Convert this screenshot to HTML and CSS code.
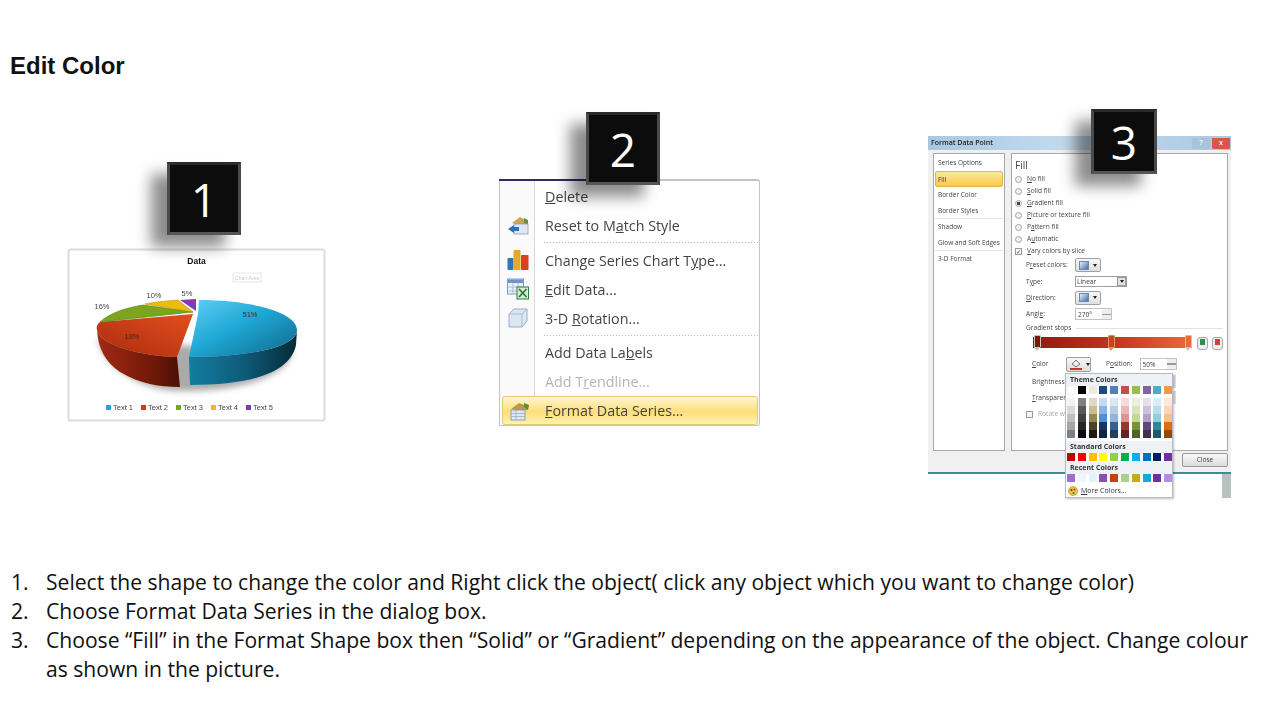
FILE: index.html
```html
<!DOCTYPE html>
<html lang="en">
<head>
    <meta charset="UTF-8">
    <title>Edit Color</title>
    <link rel="stylesheet" href="styles.css">
</head>
<body>
<div class="slide">
    <h1 class="title">Edit Color</h1>

    <div class="stage">
        <!-- step 1: chart -->
        <svg class="chart shot" viewBox="67 248 259 174" width="259" height="174">
            <defs>
                <linearGradient id="blueTop" x1="0" y1="0" x2="1" y2="1">
                    <stop offset="0" stop-color="#5fd0f2"/>
                    <stop offset=".45" stop-color="#1fa8d6"/>
                    <stop offset="1" stop-color="#0f6687"/>
                </linearGradient>
                <linearGradient id="blueSide" x1="0" y1="0" x2="1" y2="0">
                    <stop offset="0" stop-color="#147da2"/>
                    <stop offset=".5" stop-color="#0e5c79"/>
                    <stop offset="1" stop-color="#062a38"/>
                </linearGradient>
                <linearGradient id="redTop" x1="1" y1="0" x2="0" y2="1">
                    <stop offset="0" stop-color="#e2501c"/>
                    <stop offset="1" stop-color="#a92a10"/>
                </linearGradient>
                <linearGradient id="redSide" x1="0" y1="0" x2="1" y2="0">
                    <stop offset="0" stop-color="#a32a12"/>
                    <stop offset=".7" stop-color="#6d1809"/>
                    <stop offset="1" stop-color="#4d0f05"/>
                </linearGradient>
                <filter id="soft" x="-10%" y="-10%" width="120%" height="130%">
                    <feGaussianBlur stdDeviation="3"/>
                </filter>
            </defs>
            <rect class="chart-frame" x="68.5" y="249.5" width="256" height="171" rx="2"/>
            <text class="chart-title" x="196.5" y="264">Data</text>
            <rect x="233" y="273" width="28" height="9" fill="#fff" stroke="#ddd" stroke-width=".7"/>
            <text x="247" y="280" class="chart-ghost">Chart Area</text>

            <path d="M98 340 C104 368 145 392 182 391 L192 391 C240 390 285 378 293 352 Z" fill="#aaa" filter="url(#soft)"/>

            <path d="M97 330 C98 348 105 362 120 372 C140 384 160 387 180 387 L177 357 C140 356 100 345 97 330 Z" fill="url(#redSide)"/>
            <path d="M193 314 L100 322 C97 324 96 327 97 330 C100 345 140 356 177 357 Z" fill="url(#redTop)"/>
            <path d="M193 312 L100 322 C110 313 125 308 143 305 Z" fill="#7ba51d" stroke="#557a10" stroke-width=".6"/>
            <path d="M193 312 L145 304 C155 302 165 301 178 300 Z" fill="#edbd0b" stroke="#a98408" stroke-width=".5"/>
            <path d="M196 311 L180 300 L196 299 Z" fill="#8239b5"/>

            <path d="M297 330 C297 347 250 357 189 357 L190 385 C245 385 290 375 296 345 Z" fill="url(#blueSide)"/>
            <path d="M199 300 C250 300 297 312 297 330 C297 347 250 357 189 357 L198 314 Z" fill="url(#blueTop)"/>

            <text class="pie-pct" x="250" y="317">51%</text>
            <text class="pie-pct" x="132" y="339">18%</text>
            <text class="pie-out" x="102" y="309">16%</text>
            <text class="pie-out" x="154" y="298">10%</text>
            <text class="pie-out" x="187" y="296">5%</text>

            <rect x="106" y="405" width="5" height="5" fill="#1fa8d6"/>
            <text class="legend" x="113" y="410">Text 1</text>
            <rect x="141" y="405" width="5" height="5" fill="#c8401a"/>
            <text class="legend" x="148" y="410">Text 2</text>
            <rect x="176" y="405" width="5" height="5" fill="#7ba51d"/>
            <text class="legend" x="183" y="410">Text 3</text>
            <rect x="211" y="405" width="5" height="5" fill="#edbd0b"/>
            <text class="legend" x="218" y="410">Text 4</text>
            <rect x="246" y="405" width="5" height="5" fill="#8239b5"/>
            <text class="legend" x="253" y="410">Text 5</text>
        </svg>

        <!-- step 2: context menu -->
        <div class="menu shot">
            <div class="menu-row"><span class="menu-icon"></span><span><u>D</u>elete</span></div>
            <div class="menu-row">
                <span class="menu-icon">
                    <svg width="22" height="22" viewBox="0 0 22 22">
                        <path d="M5 8 L13 2 L20 6 L20 9 L8 9 Z" fill="#c9a552"/>
                        <rect x="7" y="9" width="14" height="10" fill="#dfe8f2" stroke="#8b9db3" stroke-width=".8"/>
                        <path d="M1 14 L7 10 L7 12 L12 12 L12 16 L7 16 L7 18 Z" fill="#2f6db5"/>
                        <path d="M17 3 L21 5 L21 9 L17 8 Z" fill="#6c8f3c"/>
                    </svg>
                </span>
                <span>Reset to M<u>a</u>tch Style</span>
            </div>
            <div class="menu-sep"></div>
            <div class="menu-row">
                <span class="menu-icon">
                    <svg width="22" height="22" viewBox="0 0 22 22">
                        <rect x="0.5" y="9" width="6" height="12" rx="1" fill="#2f73b8"/>
                        <rect x="6.5" y="1" width="7" height="20" rx="1" fill="#e3a92b"/>
                        <rect x="14" y="6" width="7.5" height="15" rx="1" fill="#d8431f"/>
                    </svg>
                </span>
                <span>Change Series Chart T<u>y</u>pe...</span>
            </div>
            <div class="menu-row">
                <span class="menu-icon">
                    <svg width="22" height="22" viewBox="0 0 22 22">
                        <rect x="0.5" y="1" width="16" height="15" fill="#eaf0f8" stroke="#7f9cc4"/>
                        <rect x="1" y="1.5" width="15" height="3.5" fill="#6f94c9"/>
                        <path d="M1 9 H16 M1 13 H16 M6 5 V16 M11 5 V16" stroke="#9db4d6" stroke-width=".8"/>
                        <rect x="10" y="9" width="11.5" height="12" fill="#d9ecd8" stroke="#2d7d3c"/>
                        <path d="M12 11 L19.5 19 M19.5 11 L12 19" stroke="#1f7a33" stroke-width="1.7"/>
                    </svg>
                </span>
                <span><u>E</u>dit Data...</span>
            </div>
            <div class="menu-row">
                <span class="menu-icon">
                    <svg width="22" height="22" viewBox="0 0 22 22">
                        <path d="M2 7 L7 2 L20 2 L20 14 L15 20 L2 20 Z" fill="#dbe6f2" stroke="#9aaec8"/>
                        <path d="M2 7 L15 7 L15 20 M15 7 L20 2" fill="none" stroke="#a9bcd3"/>
                    </svg>
                </span>
                <span>3-D <u>R</u>otation...</span>
            </div>
            <div class="menu-sep"></div>
            <div class="menu-row"><span class="menu-icon"></span><span>Add Data La<u>b</u>els</span></div>
            <div class="menu-row menu-disabled"><span class="menu-icon"></span><span>Add T<u>r</u>endline...</span></div>
            <div class="menu-row menu-active">
                <span class="menu-icon">
                    <svg width="22" height="22" viewBox="0 0 22 22">
                        <path d="M3 9 L11 3 L19 6 L20 10 L8 10 Z" fill="#b99a4e"/>
                        <rect x="3" y="10" width="14" height="10" fill="#dfe8f2" stroke="#7d8fa6" stroke-width=".8"/>
                        <path d="M3 13.5 H17 M3 16.5 H17 M8 10 V20" stroke="#93a6bf" stroke-width=".7"/>
                        <path d="M16 3 L21 5 L20 10 L16 7 Z" fill="#5e8a3a"/>
                    </svg>
                </span>
                <span><u>F</u>ormat Data Series...</span>
            </div>
        </div>

        <!-- step 3: format dialog -->
        <div class="dialog shot">
            <div class="dlg-title">
                <span>Format Data Point</span>
                <span class="dlg-help">?</span>
                <span class="dlg-close">x</span>
            </div>
            <div class="dlg-body">
                <div class="dlg-nav">
                    <div class="nav-item">Series Options</div>
                    <div class="nav-item nav-active">Fill</div>
                    <div class="nav-item">Border Color</div>
                    <div class="nav-item nav-rule">Border Styles</div>
                    <div class="nav-item">Shadow</div>
                    <div class="nav-item nav-rule">Glow and Soft Edges</div>
                    <div class="nav-item">3-D Format</div>
                </div>
                <div class="dlg-pane">
                    <div class="pane-head">Fill</div>
                    <div class="opt"><i class="radio"></i><span><u>N</u>o fill</span></div>
                    <div class="opt"><i class="radio"></i><span><u>S</u>olid fill</span></div>
                    <div class="opt"><i class="radio radio-on"></i><span><u>G</u>radient fill</span></div>
                    <div class="opt"><i class="radio"></i><span><u>P</u>icture or texture fill</span></div>
                    <div class="opt"><i class="radio"></i><span>P<u>a</u>ttern fill</span></div>
                    <div class="opt"><i class="radio"></i><span>A<u>u</u>tomatic</span></div>
                    <div class="opt"><i class="check">&#10003;</i><span><u>V</u>ary colors by slice</span></div>

                    <div class="field"><label>P<u>r</u>eset colors:</label><span class="pick"><i class="pick-swatch"></i><i class="caret"></i></span></div>
                    <div class="field"><label>T<u>y</u>pe:</label><span class="combo">Linear<i class="combo-btn"><i class="caret"></i></i></span></div>
                    <div class="field"><label><u>D</u>irection:</label><span class="pick"><i class="pick-swatch"></i><i class="caret"></i></span></div>
                    <div class="field"><label>Angl<u>e</u>:</label><span class="spin">270&deg;<i class="spin-btn"></i></span></div>
                    <div class="stops-label"><span>Gradient stops</span><i class="stops-line"></i></div>
                    <div class="stops">
                        <div class="stops-bar">
                            <i class="stop stop-a"></i>
                            <i class="stop stop-b"></i>
                            <i class="stop stop-c"></i>
                        </div>
                        <i class="stop-btn stop-add"></i>
                        <i class="stop-btn stop-del"></i>
                    </div>
                    <div class="color-row">
                        <label class="color-label"><u>C</u>olor</label>
                        <span class="pick pick-fill">
                            <svg width="12" height="12" viewBox="0 0 12 12">
                                <path d="M2 6 L6 2 L10 6 L6 9 Z" fill="#e8eef6" stroke="#556" stroke-width=".8"/>
                                <rect x="0" y="10" width="12" height="2" fill="#c0392b"/>
                            </svg>
                            <i class="caret"></i>
                        </span>
                        <label class="pos-label">P<u>o</u>sition:</label>
                        <span class="spin spin-small">50%<i class="spin-btn"></i></span>
                    </div>
                    <div class="field field-low"><label>Brightness</label><i class="peek"></i></div>
                    <div class="field field-low"><label><u>T</u>ransparency</label><i class="peek"></i></div>
                    <div class="opt opt-off"><i class="check"></i><span>Rotate with shape</span></div>
                </div>
            </div>
            <div class="dlg-foot"><span class="btn">Close</span></div>
        </div>
        <div class="dlg-scrap"></div>

        <div class="popup shot">
            <div class="pop-label pop-first">Theme Colors</div>
            <svg class="swatches swatches-theme" width="106" height="55">
                <g>
                    <rect x="1" y="0" width="8" height="8" fill="#fff" stroke="#ddd" stroke-width=".5"/>
                    <rect x="12" y="0" width="8" height="8" fill="#000"/>
                    <rect x="23" y="0" width="8" height="8" fill="#eeece1"/>
                    <rect x="33" y="0" width="8" height="8" fill="#1f497d"/>
                    <rect x="44" y="0" width="8" height="8" fill="#4f81bd"/>
                    <rect x="55" y="0" width="8" height="8" fill="#c0504d"/>
                    <rect x="66" y="0" width="8" height="8" fill="#9bbb59"/>
                    <rect x="77" y="0" width="8" height="8" fill="#8064a2"/>
                    <rect x="87" y="0" width="8" height="8" fill="#4bacc6"/>
                    <rect x="98" y="0" width="8" height="8" fill="#f79646"/>
                </g>
                <g>
                    <rect x="1" y="12" width="8" height="8" fill="#f2f2f2"/>
                    <rect x="12" y="12" width="8" height="8" fill="#7f7f7f"/>
                    <rect x="23" y="12" width="8" height="8" fill="#ddd9c4"/>
                    <rect x="33" y="12" width="8" height="8" fill="#c6d9f0"/>
                    <rect x="44" y="12" width="8" height="8" fill="#dce6f1"/>
                    <rect x="55" y="12" width="8" height="8" fill="#f2dcdb"/>
                    <rect x="66" y="12" width="8" height="8" fill="#ebf1de"/>
                    <rect x="77" y="12" width="8" height="8" fill="#e4dfec"/>
                    <rect x="87" y="12" width="8" height="8" fill="#daeef3"/>
                    <rect x="98" y="12" width="8" height="8" fill="#fde9d9"/>
                </g>
                <g>
                    <rect x="1" y="20" width="8" height="8" fill="#d9d9d9"/>
                    <rect x="12" y="20" width="8" height="8" fill="#595959"/>
                    <rect x="23" y="20" width="8" height="8" fill="#c4bd97"/>
                    <rect x="33" y="20" width="8" height="8" fill="#8db3e2"/>
                    <rect x="44" y="20" width="8" height="8" fill="#b8cce4"/>
                    <rect x="55" y="20" width="8" height="8" fill="#e6b8b7"/>
                    <rect x="66" y="20" width="8" height="8" fill="#d8e4bc"/>
                    <rect x="77" y="20" width="8" height="8" fill="#ccc0da"/>
                    <rect x="87" y="20" width="8" height="8" fill="#b7dee8"/>
                    <rect x="98" y="20" width="8" height="8" fill="#fcd5b4"/>
                </g>
                <g>
                    <rect x="1" y="28" width="8" height="8" fill="#bfbfbf"/>
                    <rect x="12" y="28" width="8" height="8" fill="#404040"/>
                    <rect x="23" y="28" width="8" height="8" fill="#948a54"/>
                    <rect x="33" y="28" width="8" height="8" fill="#538dd5"/>
                    <rect x="44" y="28" width="8" height="8" fill="#95b3d7"/>
                    <rect x="55" y="28" width="8" height="8" fill="#da9694"/>
                    <rect x="66" y="28" width="8" height="8" fill="#c4d79b"/>
                    <rect x="77" y="28" width="8" height="8" fill="#b1a0c7"/>
                    <rect x="87" y="28" width="8" height="8" fill="#92cddc"/>
                    <rect x="98" y="28" width="8" height="8" fill="#fabf8f"/>
                </g>
                <g>
                    <rect x="1" y="36" width="8" height="8" fill="#a6a6a6"/>
                    <rect x="12" y="36" width="8" height="8" fill="#262626"/>
                    <rect x="23" y="36" width="8" height="8" fill="#4a452a"/>
                    <rect x="33" y="36" width="8" height="8" fill="#17365d"/>
                    <rect x="44" y="36" width="8" height="8" fill="#366092"/>
                    <rect x="55" y="36" width="8" height="8" fill="#963634"/>
                    <rect x="66" y="36" width="8" height="8" fill="#76933c"/>
                    <rect x="77" y="36" width="8" height="8" fill="#60497a"/>
                    <rect x="87" y="36" width="8" height="8" fill="#31869b"/>
                    <rect x="98" y="36" width="8" height="8" fill="#e26b0a"/>
                </g>
                <g>
                    <rect x="1" y="44" width="8" height="8" fill="#808080"/>
                    <rect x="12" y="44" width="8" height="8" fill="#0d0d0d"/>
                    <rect x="23" y="44" width="8" height="8" fill="#1e1c11"/>
                    <rect x="33" y="44" width="8" height="8" fill="#0f243e"/>
                    <rect x="44" y="44" width="8" height="8" fill="#244061"/>
                    <rect x="55" y="44" width="8" height="8" fill="#632523"/>
                    <rect x="66" y="44" width="8" height="8" fill="#4f6228"/>
                    <rect x="77" y="44" width="8" height="8" fill="#403151"/>
                    <rect x="87" y="44" width="8" height="8" fill="#215967"/>
                    <rect x="98" y="44" width="8" height="8" fill="#974706"/>
                </g>
            </svg>
            <div class="pop-label">Standard Colors</div>
            <svg class="swatches" width="106" height="9">
                <rect x="1" y="0" width="8" height="8" fill="#c00000"/>
                <rect x="12" y="0" width="8" height="8" fill="#ff0000"/>
                <rect x="23" y="0" width="8" height="8" fill="#ffc000"/>
                <rect x="33" y="0" width="8" height="8" fill="#ffff00"/>
                <rect x="44" y="0" width="8" height="8" fill="#92d050"/>
                <rect x="55" y="0" width="8" height="8" fill="#00b050"/>
                <rect x="66" y="0" width="8" height="8" fill="#00b0f0"/>
                <rect x="77" y="0" width="8" height="8" fill="#0070c0"/>
                <rect x="87" y="0" width="8" height="8" fill="#002060"/>
                <rect x="98" y="0" width="8" height="8" fill="#7030a0"/>
            </svg>
            <div class="pop-label">Recent Colors</div>
            <svg class="swatches" width="106" height="9">
                <rect x="1" y="0" width="8" height="8" fill="#a06dd0"/>
                <rect x="12" y="0" width="8" height="8" fill="#eef7fb"/>
                <rect x="23" y="0" width="8" height="8" fill="#e3f3f8"/>
                <rect x="33" y="0" width="8" height="8" fill="#8a4fb5"/>
                <rect x="44" y="0" width="8" height="8" fill="#c8400f"/>
                <rect x="55" y="0" width="8" height="8" fill="#a9d18e"/>
                <rect x="66" y="0" width="8" height="8" fill="#c8aa12"/>
                <rect x="77" y="0" width="8" height="8" fill="#12a9dc"/>
                <rect x="87" y="0" width="8" height="8" fill="#6f2fa0"/>
                <rect x="98" y="0" width="8" height="8" fill="#b18ce8"/>
            </svg>
            <div class="pop-more">
                <svg width="10" height="10" viewBox="0 0 10 10">
                    <circle cx="5" cy="5" r="4.5" fill="#e9c53a" stroke="#a98a1c" stroke-width=".6"/>
                    <circle cx="3.5" cy="4" r="1" fill="#444"/>
                    <circle cx="6.5" cy="3.5" r="1" fill="#c0392b"/>
                    <circle cx="5.5" cy="7" r="1" fill="#2f6db5"/>
                </svg>
                <span><u>M</u>ore Colors...</span>
            </div>
        </div>

        <div class="badge badge-one">1</div>
        <div class="badge badge-two">2</div>
        <div class="badge badge-three">3</div>
    </div>

    <ol class="steps">
        <li>Select the shape to change the color and Right click the object( click any object which you want to change color)</li>
        <li>Choose Format Data Series in the dialog box.</li>
        <li>Choose &ldquo;Fill&rdquo; in the Format Shape box then &ldquo;Solid&rdquo; or &ldquo;Gradient&rdquo; depending on the appearance of the object. Change colour as shown in the picture.</li>
    </ol>
</div>
</body>
</html>
```

FILE: styles.css
```css
* {
    box-sizing: border-box;
}
html, body {
    margin: 0;
    background: #fff;
}
.slide {
    width: 1280px;
    height: 720px;
    overflow: hidden;
    color: #111;
    font-family: "Open Sans", sans-serif;
}
.title {
    margin: 0;
    height: 100px;
    padding: 52px 0 0 10px;
    font: bold 24px/28px "Liberation Sans", sans-serif;
}

/* free canvas, the pictures sit where the slide put them */
.stage {
    position: relative;
    height: 467px;
}
.shot {
    position: absolute;
    filter: blur(.35px);
}
.badge {
    position: absolute;
    display: flex;
    align-items: center;
    justify-content: center;
    color: #fff;
    background: #0c0c0c;
    border: 3px solid;
    border-color: #2a2a2a #4a4a4a #555 #4a4a4a;
    font-size: 46px;
    font-weight: 400;
    box-shadow: -16px 12px 14px rgba(0, 0, 0, .45);
}
.badge-one {
    left: 167px;
    top: 62px;
    width: 74px;
    height: 73px;
}
.badge-two {
    left: 586px;
    top: 12px;
    width: 74px;
    height: 73px;
}
.badge-three {
    left: 1091px;
    top: 9px;
    width: 66px;
    height: 65px;
}

/* chart */
.chart {
    left: 67px;
    top: 148px;
}
.chart-frame {
    fill: #fff;
    stroke: #dcdcdc;
    stroke-width: 2;
}
.chart-title {
    font: bold 8.5px "Liberation Sans", sans-serif;
    text-anchor: middle;
    fill: #111;
}
.chart-ghost {
    font: 5px "Liberation Sans", sans-serif;
    text-anchor: middle;
    fill: #ccc;
}
.pie-pct {
    font: 7.5px "Liberation Sans", sans-serif;
    text-anchor: middle;
    fill: #3a2a20;
}
.pie-out {
    font: 7.5px "Liberation Sans", sans-serif;
    text-anchor: middle;
    fill: #444;
}
.legend {
    font: 7.5px "Liberation Sans", sans-serif;
    fill: #444;
}

/* context menu */
.menu {
    left: 499px;
    top: 79px;
    width: 261px;
    height: 247px;
    padding-top: 1px;
    background: linear-gradient(90deg, #fafafa 34px, #d9d9d9 34px, #d9d9d9 35px, #fff 35px);
    border: 1px solid #c4c4c4;
    border-top: 2px solid #c4c4c4;
    border-radius: 0 3px 3px 0;
    color: #444;
    font-size: 14.3px;
}
.menu::before {
    content: "";
    position: absolute;
    left: -1px;
    top: -2px;
    width: 90px;
    height: 2px;
    background: #2e2a6b;
}
.menu-row {
    display: flex;
    align-items: center;
    height: 29px;
}
.menu-icon {
    display: flex;
    align-items: center;
    justify-content: center;
    width: 35px;
    margin-right: 10px;
}
.menu-sep {
    height: 5.5px;
    margin-left: 44px;
    background: linear-gradient(90deg, #bbb 50%, transparent 50%) 0 2px / 3px 1px repeat-x;
}
.menu-disabled {
    color: #b5b5b5;
}
.menu-active {
    margin: 0 1px 0 2px;
    border: 1px solid #e6c873;
    border-radius: 3px;
    background: linear-gradient(#fff6d0, #fddf78 55%, #fff1b4);
}
.menu-active .menu-icon {
    width: 32px;
}

/* format dialog */
.dialog {
    left: 928px;
    top: 36px;
    width: 303px;
    height: 338px;
    display: flex;
    flex-direction: column;
    background: #f0f0f0;
    border-bottom: 2px solid #3f8c8c;
    color: #444;
    font-size: 6.6px;
    line-height: 12px;
}
.dlg-title {
    display: flex;
    align-items: center;
    height: 14px;
    padding: 0 1px 0 3px;
    background: linear-gradient(90deg, #a9c8e0, #c6dcef 50%, #a9c8e0);
    color: #222;
    font-size: 7px;
    font-weight: 600;
}
.dlg-title span:first-child {
    flex: 1;
}
.dlg-help, .dlg-close {
    width: 18px;
    height: 11px;
    margin-left: 2px;
    border-radius: 0 0 2px 2px;
    color: #fff;
    text-align: center;
    line-height: 10px;
    background: #a9c3dc;
}
.dlg-close {
    background: #d8564a;
}
.dlg-body {
    display: flex;
    gap: 6px;
    padding: 3px 3px 0 5px;
}
.dlg-nav {
    width: 72px;
    height: 298px;
    padding: 1px 1px;
    background: #fff;
    border: 1px solid #a8a8a8;
}
.nav-item {
    height: 16px;
    padding-left: 3px;
    line-height: 15px;
    white-space: nowrap;
    font-size: 6.5px;
}
.nav-active {
    background: linear-gradient(#ffe9a0, #fbc948);
    border: 1px solid #e3b34c;
    border-radius: 2px;
    padding-left: 2px;
    color: #333;
}
.nav-rule {
    border-bottom: 1px solid #e6e6e6;
}
.dlg-pane {
    flex: 1;
    height: 298px;
    padding: 4px 0 0 3px;
    background: #fff;
    border: 1px solid #a8a8a8;
}
.pane-head {
    height: 15px;
    font-size: 10px;
    line-height: 15px;
}
.opt {
    display: flex;
    align-items: center;
    gap: 5px;
    height: 12px;
}
.radio {
    width: 7px;
    height: 7px;
    border: 1px solid #a5a5a5;
    border-radius: 50%;
    background: #efefef;
}
.radio-on {
    background: radial-gradient(#2a4a6a 40%, #efefef 50%);
}
.check {
    width: 7px;
    height: 7px;
    border: 1px solid #999;
    background: #f6f6f6;
    color: #2a4a8a;
    font-style: normal;
    font-size: 6px;
    line-height: 6px;
}
.field {
    display: flex;
    align-items: center;
    height: 16.4px;
    padding-left: 11px;
}
.field label {
    width: 49px;
    white-space: nowrap;
}
.field-low {
    height: 16px;
    padding-left: 17px;
}
.peek {
    width: 3px;
    height: 13px;
    margin: 0 51px 0 auto;
    background: #d8dde3;
}
.pick {
    display: flex;
    align-items: center;
    gap: 4px;
    width: 26px;
    height: 14px;
    padding-left: 3px;
    background: linear-gradient(#f8f8f8, #dedede);
    border: 1px solid #a0a0a0;
    border-radius: 2px;
}
.pick-swatch {
    width: 10px;
    height: 9px;
    background: linear-gradient(135deg, #e8f0f8, #3c6fb0);
    border: 1px solid #6e88a8;
}
.caret {
    width: 0;
    height: 0;
    border: 2.5px solid transparent;
    border-top: 3px solid #222;
    border-bottom: 0;
}
.combo {
    position: relative;
    width: 52px;
    height: 11px;
    padding-left: 1px;
    line-height: 10px;
    border: 1px solid #a0a0a0;
}
.combo-btn {
    position: absolute;
    right: 0;
    top: 0;
    display: flex;
    align-items: center;
    justify-content: center;
    width: 9px;
    height: 9px;
    background: #e4e4e4;
    border: 1px solid #999;
}
.spin {
    position: relative;
    width: 37px;
    height: 12px;
    padding-left: 2px;
    line-height: 11px;
    border: 1px solid #c2c2c2;
}
.spin-btn {
    position: absolute;
    right: 0;
    top: 0;
    width: 9px;
    height: 10px;
    background: linear-gradient(#eee 45%, #999 45%, #999 55%, #eee 55%);
}
.spin-small {
    width: 37px;
}
.stops-label {
    display: flex;
    align-items: center;
    gap: 5px;
    height: 11px;
    padding-left: 11px;
    white-space: nowrap;
}
.stops-line {
    flex: 1;
    height: 1px;
    margin-right: 4px;
    background: #e2e2e2;
}
.stops {
    display: flex;
    align-items: flex-start;
    height: 21px;
    padding: 3px 0 0 18px;
}
.stops-bar {
    position: relative;
    width: 159px;
    height: 11px;
    margin-right: 5px;
    background: linear-gradient(90deg, #8e1b14, #c0341c 50%, #ec6a3a);
}
.stop {
    position: absolute;
    top: -2px;
    width: 7px;
    height: 13px;
    background: #a3271a;
    border: 1px solid #c9c2b8;
    border-radius: 1px;
}
.stop::after {
    content: "";
    position: absolute;
    left: -1px;
    top: 11px;
    border: 3.5px solid transparent;
    border-top: 4px solid #c9c2b8;
    border-bottom: 0;
}
.stop-a {
    left: 1px;
    background: #7e1610;
}
.stop-b {
    left: 75px;
    border-color: #e0915e;
    background: #c8441f;
}
.stop-b::after {
    border-top-color: #e0915e;
}
.stop-c {
    left: 152px;
    background: #ec6a3a;
}
.stop-btn {
    width: 11px;
    height: 13px;
    margin-right: 4px;
    border: 1px solid #a9a9a9;
    border-radius: 3px;
    background: linear-gradient(#2f8f4a, #2f8f4a) center 1px / 5px 6px no-repeat, #eee;
}
.stop-del {
    background: linear-gradient(#c8443c, #c8443c) center 1px / 5px 6px no-repeat, #eee;
}
.color-row {
    display: flex;
    align-items: center;
    height: 19px;
    padding-left: 17px;
}
.color-label {
    width: 34px;
    white-space: nowrap;
}
.pick-fill {
    width: 25px;
    height: 15px;
}
.pos-label {
    margin: 0 7px 0 15px;
    white-space: nowrap;
}
.opt-off {
    padding-left: 11px;
    height: 17px;
    color: #aaa;
}
.dlg-foot {
    flex: 1;
    display: flex;
    align-items: flex-start;
    justify-content: flex-end;
    padding: 2px 3px 0 0;
}
.btn {
    width: 46px;
    height: 14px;
    line-height: 12px;
    text-align: center;
    border: 1px solid #9a9a9a;
    border-radius: 2px;
    background: linear-gradient(#f8f8f8, #dcdcdc);
}
.dlg-scrap {
    position: absolute;
    left: 1222px;
    top: 374px;
    width: 9px;
    height: 24px;
    background: #b9c0c0;
}
.popup {
    left: 1065px;
    top: 273px;
    width: 108px;
    height: 125px;
    background: #fff;
    border: 1px solid #b5bcc6;
    box-shadow: 1px 1px 2px rgba(0, 0, 0, .25);
    color: #333;
    font-size: 7px;
}
.pop-label {
    height: 12px;
    padding-left: 4px;
    background: #eef1f5;
    font-weight: 700;
    line-height: 12px;
}
.pop-first {
    height: 11.5px;
    line-height: 11px;
}
.swatches {
    display: block;
}
.pop-more {
    display: flex;
    align-items: center;
    gap: 3px;
    padding: 3px 0 0 2px;
    font-size: 7px;
}

/* instructions */
.steps {
    margin: 0;
    padding: 0 10px 0 11px;
    list-style: none;
    counter-reset: step;
    font-size: 21.1px;
    line-height: 29px;
    color: #111;
}
.steps li {
    display: flex;
    counter-increment: step;
}
.steps li::before {
    content: counter(step) ".";
    flex: none;
    width: 35px;
}
```
